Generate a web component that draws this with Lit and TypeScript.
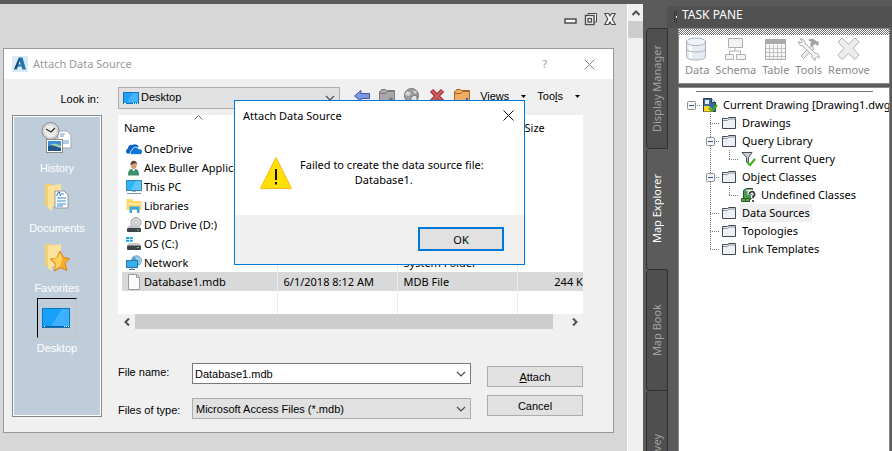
import { LitElement, html, css, svg, nothing } from "lit";
import { customElement, state } from "lit/decorators.js";
import { classMap } from "lit/directives/class-map.js";

const icon = (w: number, h: number, body: unknown) =>
  html`<svg width=${w} height=${h} viewBox="0 0 ${w} ${h}" aria-hidden="true">${body}</svg>`;

const chevron = icon(10, 6, svg`<path d="M1 1l4 4 4-4" fill="none" stroke="#4a4a4a" stroke-width="1.2"/>`);
const caret = icon(5, 3, svg`<path d="M0 0h5L2.500 3z" fill="#000"/>`);

const smallIcons: Record<string, unknown> = {
  onedrive: svg`<path d="M1 12.500a3 3 0 0 1 1-5 3.500 3.500 0 0 1 4.500-3.500A4.500 4.500 0 0 1 13 6l-3 .5-3 1.500-2 2v2.500z" fill="#0a64c4"/><path d="M5.500 13.500a2.500 2.500 0 0 1 .5-4.500A3.600 3.600 0 0 1 12.700 8 2.800 2.800 0 0 1 14.500 13.500z" fill="#0d74d8" stroke="#fff" stroke-width=".7"/>`,
  user: svg`<path d="M2 15.500c0-4 1-6 3-6.500h5c2 .5 3 2.500 3 6.500z" fill="#3d8f6b"/><path d="M6 9l1.500 2.500L9.500 9z" fill="#fff"/><ellipse cx="7.700" cy="5" rx="3" ry="4" fill="#d8a07a"/><path d="M4.500 5c-.5-5 6.500-6 6.500-.5L9.500 3z" fill="#5a4336"/>`,
  pc: svg`<rect x="0.500" y="1.500" width="15" height="10" fill="#2fb4f5" stroke="#3a86b8"/><path d="M10 2L5 11h10V2z" fill="#5cc8fa"/><path d="M1 14.500h14" stroke="#7795a8"/><path d="M6 12h4v1H6z" fill="#9fb2bf"/>`,
  libraries: svg`<path d="M0.500 1h6l1 2h8v9h-15z" fill="#ffd76a"/><path d="M0.500 5h15v2h-15z" fill="#ffe59a"/><path d="M3.500 15V8.500h10V15h-2.500v-3.500H6V15z" fill="#35a7e0"/>`,
  dvd: svg`<circle cx="10" cy="5.500" r="5" fill="#d6d8da" stroke="#8d9194" stroke-width=".8"/><circle cx="10" cy="5.500" r="1.600" fill="#fff" stroke="#999" stroke-width=".6"/><path d="M3 8.500h9l3 3H1z" fill="#c2c5c8"/><rect x="1" y="11" width="14" height="4" rx="1" fill="#3e4347"/><rect x="11" y="12.500" width="2" height="1" fill="#4be04b"/>`,
  disk: svg`<path d="M0 1h3v2H0zM3.700 1h3v2h-3zM0 3.700h3v2H0zM3.700 3.700h3v2h-3z" fill="#12a4ec"/><path d="M3 7h10l2 3H1z" fill="#c9ccce"/><rect x="1" y="9.500" width="14" height="4.500" rx="1" fill="#3e4347"/><rect x="11" y="11" width="2" height="1" fill="#4be04b"/>`,
  network: svg`<circle cx="10.500" cy="5.500" r="5.300" fill="#5b9cc8"/><path d="M7 1.500c3 1 4 3 2 5l5 3c2-3 2-6 0-8z" fill="#98c9e4"/><rect x="0.500" y="5.500" width="11" height="7" fill="#34b0f0" stroke="#2d74a8"/><path d="M3 14.500h6M6 12.500v2" stroke="#4e86ab"/>`,
  file: svg`<path d="M2.500.5h8l3 3v12h-11z" fill="#fbfbfb" stroke="#9a9a9a"/><path d="M10.500.5v3h3" fill="none" stroke="#9a9a9a"/>`,
};

const screen = svg`<rect x="0.500" y="0.500" width="15" height="11" fill="#1ea2fb" stroke="#1273b8"/><path d="M10 1L4 10h11V1z" fill="#44b3ff"/><path d="M1 11.500h2m7 0h1m1 0h1m1 0h1" stroke="#fff"/>`;

const placeFolder = svg`<path d="M4 2h7v25l-7-4z" fill="#f3cf74"/><path d="M7 4l13-2v21l-9 1v5l-4-3z" fill="#fbe29a"/>`;

const placeIcons: Record<string, unknown> = {
  History: svg`<path d="M17 9h9l4 4v13H17z" fill="#fff" stroke="#a9adb1"/><path d="M19 12h5m-5 2h4m-4 5h9m-9 2h9" stroke="#6b9ccb"/><circle cx="9.500" cy="9" r="8.500" fill="#d9d9d9" stroke="#8a8a8a"/><circle cx="9.500" cy="9" r="6.500" fill="#ececec" stroke="#b5b5b5" stroke-dasharray="1 2.400"/><path d="M5 7l5 3 4-4" fill="none" stroke="#333" stroke-width="1.300"/><rect x="5.500" y="17.500" width="16" height="13" fill="#fff" stroke="#8c8c8c"/><path d="M7 19h13v5H7z" fill="#3c8fd6"/><path d="M7 25c4-5 9-3 13-1v5H7z" fill="#a9cfb0"/><path d="M7 24c4-2 8 1 13 2v3H7z" fill="#25578a"/>`,
  Documents: svg`${placeFolder}<path d="M14 9h9l4 4v13H14z" fill="#fff" stroke="#96999c"/><path d="M20 12h3M16 16h9m-9 3h9m-9 3h9m-9 2h6" stroke="#2e8bd0"/><path d="M15.500 14l2-4h1l1 4" fill="none" stroke="#2e6fb0"/>`,
  Favorites: svg`${placeFolder}<path d="M19 9l3.500 6.500 6 1-4.500 5 2 7-6.500-3-6 3.500 1-7-5-5 6.500-1z" fill="#f9ab2c" stroke="#dd7e17"/><path d="M19 11l2.500 5.500-2.500 8-5 2.500 1-6-4-4 5-1z" fill="#fdd05a"/>`,
  Desktop: svg`<rect x="1.500" y="6.500" width="27" height="19" fill="#16a0fa" stroke="#1273b8"/><path d="M21 7L10 24h18V7z" fill="#3db0ff"/><path d="M2 24.500h26" stroke="#0d5f9c"/><path d="M3 24.500h1m19 0h1m1 0h1m1 0h1" stroke="#fff"/>`,
};

const navFolder = (fill: string, edge: string) =>
  svg`<path d="M0.500 14V3.500h1l1-2h4l1 1h8V14z" fill=${fill} stroke=${edge}/><path d="M1 5.500h6l1.500-2h7" fill="none" stroke=${edge}/>`;

const navTools = [
  { label: "Back", body: svg`<path d="M0.500 8L7 2.500V5.500h8.500v5H7v3z" fill="#7d96e0" stroke="#3f57ad"/>` },
  { label: "Up one level", body: svg`${navFolder("#a8a8a8", "#7b7b7b")}<path d="M12 9l3.500 4h-7z" fill="#777"/>` },
  { label: "Search the web", body: svg`<circle cx="7.500" cy="7.500" r="7" fill="#9c9c9c" stroke="#757575"/><path d="M3 3l4 2-2 3-4-1zM9 2l4 2-2 2z" fill="#d8d8d8"/><path d="M8 8.500a3 2.500 0 0 1 5 0V15H7V8.500z" fill="#e1e1e1" stroke="#777"/>` },
  { label: "Delete", body: svg`<path d="M2.500 2.500l11 11m0-11l-11 11" stroke="#8e2226" stroke-width="4.500"/><path d="M2.500 2.500l11 11m0-11l-11 11" stroke="#cf5b5e" stroke-width="2.500"/>` },
  { label: "Create new folder", body: svg`${navFolder("#efae66", "#a8641e")}<path d="M12 10h2v4h-2z" fill="#2f5fd8"/>` },
];

const paneTools = [
  { label: "Data", body: svg`<path d="M1.500 5v15c0 4 19 4 19 0V5z" fill="#e6ebf3" stroke="#a9b4c3"/><path d="M4 8v13l3 1V9z" fill="#fff"/><path d="M1.500 12c0 4 19 4 19 0" fill="none" stroke="#a9b4c3"/><ellipse cx="11" cy="4.800" rx="9.500" ry="3.800" fill="#f0f4f9" stroke="#a9b4c3"/>` },
  { label: "Schema", body: svg`<path d="M11 10v4M5.500 17v-3h11v3" fill="none" stroke="#b0b0b0"/><path d="M4.500 1.500h14v9h-14zM1.500 17.500h8v5h-8zM12.500 17.500h9v5h-9z" fill="#f3f3f3" stroke="#b0b0b0"/>` },
  { label: "Table", body: svg`<path d="M1.500 2.500h20v20h-20z" fill="#f6f6f6" stroke="#aaa"/><path d="M1 2h21v5H1z" fill="#a9a9a9"/><path d="M2 11.500h19m-19 4h19m-19 4h19M5.500 8v14m4-14v14m4-14v14m4-14v14" stroke="#c2c2c2"/>` },
  { label: "Tools", body: svg`<path d="M14 9l-10 10 2.500 2.500L17 11.500z" fill="#efefef" stroke="#a9a9a9"/><path d="M3 2a4 4 0 0 1 5 4.500l10 9.500a4 4 0 0 1 4 5l-2.500-1.500-2 2 1.500 1.500a4 4 0 0 1-4-5L5.500 9a4 4 0 0 1-4-4.500l2.500 1.500 1.500-1.500z" fill="#f6f6f6" stroke="#a9a9a9"/><path d="M11 3c3-2 6-1.500 8 1l3 1-1 4-3-2-3 3-2-2 1-3z" fill="#a4a4a4"/>` },
  { label: "Remove", body: svg`<path d="M1 5l4-4 6.500 6L18 1l4 4-6 6.500 6 6.500-4 4.500-6.500-6-6.500 6L1 18l6-6.500z" fill="#ededed" stroke="#b3b3b3" stroke-linejoin="round"/>` },
];

const treeFolder = svg`<path d="M0.500 13.500v-10h5l1.500-1h6.500v11z" fill="#eef0f3" stroke="#3f4753"/><path d="M1 5.500h4.500l1.500-1.500h6.500" fill="none" stroke="#8b929c"/>`;
const tick = (x: number, y: number) =>
  svg`<path d="M${x} ${y}l3 3 5-6" fill="none" stroke="#3fae1c" stroke-width="2"/>`;

const treeIcons: Record<string, unknown> = {
  folder: treeFolder,
  drawing: svg`<path d="M.5 1.500h8l4 4v9H.5z" fill="#3b6a9e" stroke="#2f3c4c"/><path d="M1 9h5l3 3v2.500H1z" fill="#ffd42a"/><path d="M8.500 1.500v4h4" fill="#dce8f4" stroke="#2f3c4c"/><path d="M2 3h4v4H2z" fill="#e8eef5"/>${tick(6, 11)}`,
  query: svg`<path d="M1 1.500h10L7.500 6.500V11H5.500V6.500z" fill="#c9ced4" stroke="#4a4f57"/>${tick(6, 11)}`,
  classes: svg`<path d="M2.500 3.500l3-2h6v9l-2 2h-7z" fill="#4c9a58" stroke="#2c4b32"/><path d="M5 3.500h6" stroke="#d6ecd9" stroke-width="1.500"/><path d="M.5 11.500h4v3h-4zm4 0h4v3h-4z" fill="#5cab4a" stroke="#2c5a20"/><path d="M8.500 7.500a2.500 2.500 0 1 1 3.500 2v1.800" fill="none" stroke="#fff" stroke-width="4"/><path d="M8.500 7.500a2.500 2.500 0 1 1 3.500 2v1.800M12 13v2" fill="none" stroke="#333" stroke-width="1.700"/>`,
};

type Cell = "blank" | "root" | "tee" | "elbow" | "line" | "open";
const treeRows: { text: string; icon: string; cells: Cell[]; selected?: boolean }[] = [
  { text: "Current Drawing [Drawing1.dwg]", icon: "drawing", cells: ["root"] },
  { text: "Drawings", icon: "folder", cells: ["blank", "tee"] },
  { text: "Query Library", icon: "folder", cells: ["blank", "open"] },
  { text: "Current Query", icon: "query", cells: ["blank", "line", "elbow"] },
  { text: "Object Classes", icon: "folder", cells: ["blank", "open"] },
  { text: "Undefined Classes", icon: "classes", cells: ["blank", "line", "elbow"] },
  { text: "Data Sources", icon: "folder", cells: ["blank", "tee"], selected: true },
  { text: "Topologies", icon: "folder", cells: ["blank", "tee"] },
  { text: "Link Templates", icon: "folder", cells: ["blank", "elbow"] },
];

const guide = (cell: Cell) => {
  const down = cell === "elbow" ? 9 : 18;
  const vertical = cell === "tee" || cell === "elbow" || cell === "line" || cell === "open";
  const across = cell !== "blank" && cell !== "line";
  const box = cell === "root" || cell === "open";
  return icon(19, 18, svg`
    ${vertical ? svg`<path d="M9.500 0V${down}" stroke="#7c7c7c" stroke-dasharray="1 1"/>` : nothing}
    ${across ? svg`<path d="M9 9.500h10" stroke="#7c7c7c" stroke-dasharray="1 1"/>` : nothing}
    ${box ? svg`<rect x="5.500" y="5.500" width="8" height="8" rx="1" fill="#f6f6f6" stroke="#8f8f8f"/><path d="M7 9.500h5" stroke="#2c4f9e"/>` : nothing}`);
};

@customElement("task-pane")
class TaskPane extends LitElement {
  static styles = css`
    :host { display: flex; flex-direction: column; min-width: 0; font: 11px/18px "Noto Sans", "Open Sans", sans-serif; }
    svg { display: block; flex: none; }
    .heading { display: flex; align-items: center; gap: 5px; height: 22px; margin: 6px 0 0 21px; padding-left: 7px; background: #515151; color: #fff; border-radius: 4px 0 0 0; }
    h2 { margin: 0 0 4px; font-size: 12px; font-weight: 400; line-height: 18px; }
    .columns { flex: 1; display: flex; min-height: 0; }
    .tabs { display: flex; flex-direction: column; width: 22px; flex: none; overflow: hidden; }
    .tab { flex: none; height: 121px; padding: 0; border: 1px solid #303030; border-top-width: 0; border-radius: 4px 0 0 4px; background: #4f4f4f; color: #a3a3a3; font: inherit; line-height: 16px; }
    .tab:first-child { border-top-width: 1px; }
    .tab.active { background: #5b5b5b; color: #fff; border-right-color: #5b5b5b; }
    .tab span { display: block; writing-mode: vertical-rl; transform: rotate(180deg); margin: 0 auto; }
    .panes { flex: 1; min-width: 0; display: flex; flex-direction: column; gap: 3px; padding: 0 2px 0 10px; }
    .toolbar { height: 54px; border: 1px solid #8a8a8a; background: #fff; overflow: hidden; }
    .grip { height: 6px; background: repeating-conic-gradient(#777 0 25%, #fff 0 50%) 0 0 / 2px 2px; }
    .tools { display: flex; gap: 6px; padding: 2px 6px; }
    .tool { display: flex; flex-direction: column; align-items: center; padding: 0; border: 0; background: none; font: inherit; color: #8a8a8a; }
    .tree { flex: 1; border: 1px solid #8a8a8a; border-bottom: 0; background: #fff; overflow: hidden; }
    .rule { border: 0; border-top: 1px solid #777; margin: 3px 16px 4px 17px; }
    ul { list-style: none; margin: 0; padding: 0 0 0 3px; }
    li { display: flex; align-items: center; height: 18px; white-space: nowrap; }
    .label { padding: 0 2px; }
    .mark { margin: 0 2px; }
    .selected { background: #f0f0f0; }
  `;

  @state() private active = "Map Explorer";

  render() {
    return html`
      <header class="heading">
        ${icon(3, 12, svg`<path d="M.5 0v12M2.500 1v12" stroke="#222" stroke-dasharray="1 1"/><path d="M2 5h1v2H2z" fill="#fff"/>`)}
        <h2>TASK PANE</h2>
      </header>
      <div class="columns">
        <nav class="tabs" aria-label="Panels">
          ${["Display Manager", "Map Explorer", "Map Book", "Survey"].map(
            (name) => html`<button class=${classMap({ tab: true, active: name === this.active })} @click=${() => (this.active = name)}><span>${name}</span></button>`
          )}
        </nav>
        <div class="panes">
          <div class="toolbar">
            <div class="grip"></div>
            <div class="tools">
              ${paneTools.map((t) => html`<button class="tool">${icon(24, 24, t.body)}${t.label}</button>`)}
            </div>
          </div>
          <div class="tree">
            <hr class="rule" />
            <ul>
              ${treeRows.map(
                (r) => html`<li>
                  ${r.cells.map(guide)}<span class="mark">${icon(16, 16, treeIcons[r.icon])}</span>
                  <span class=${classMap({ label: true, selected: !!r.selected })}>${r.text}</span>
                </li>`
              )}
            </ul>
          </div>
        </div>
      </div>
    `;
  }
}

@customElement("message-box")
class MessageBox extends LitElement {
  static styles = css`
    :host { display: block; box-sizing: border-box; border: 1px solid #0078d7; background: #fff; color: #000; font: 11px/15px "Noto Sans", "Open Sans", sans-serif; }
    svg { display: block; flex: none; }
    header { display: flex; align-items: center; justify-content: space-between; height: 28px; padding: 0 10px 0 8px; }
    h2 { margin: 0; font-size: 11px; font-weight: 400; }
    .close { padding: 0; border: 0; background: none; }
    .content { display: flex; gap: 8px; height: 86px; box-sizing: border-box; padding: 28px 25px 0 25px; }
    p { margin: 0; text-align: center; white-space: nowrap; }
    .name { display: block; padding-right: 16px; }
    footer { display: flex; justify-content: flex-end; height: 49px; box-sizing: border-box; padding: 12px 20px; background: #f0f0f0; }
    .ok { width: 86px; height: 24px; padding: 0; border: 2px solid #0078d7; background: #e1e1e1; font: inherit; }
  `;

  render() {
    return html`
      <header>
        <h2>Attach Data Source</h2>
        <button class="close" aria-label="Close">${icon(11, 11, svg`<path d="M.5.5l10 10m0-10l-10 10" stroke="#111"/>`)}</button>
      </header>
      <div class="content">
        ${icon(32, 32, svg`<path d="M16 .5L31.500 31.500H.5z" fill="#ffe000" stroke="#fdb913" stroke-linejoin="round"/><path d="M15 12h2v11H15zM15 25h2v2.500H15z" fill="#111"/>`)}
        <p>Failed to create the data source file:<span class="name">Database1.</span></p>
      </div>
      <footer><button class="ok">OK</button></footer>
    `;
  }
}

const files = [
  { name: "OneDrive", icon: "onedrive", date: "", type: "System Folder", size: "" },
  { name: "Alex Buller Application", icon: "user", date: "", type: "System Folder", size: "" },
  { name: "This PC", icon: "pc", date: "", type: "System Folder", size: "" },
  { name: "Libraries", icon: "libraries", date: "", type: "System Folder", size: "" },
  { name: "DVD Drive (D:)", icon: "dvd", date: "", type: "System Folder", size: "" },
  { name: "OS (C:)", icon: "disk", date: "", type: "System Folder", size: "" },
  { name: "Network", icon: "network", date: "", type: "System Folder", size: "" },
  { name: "Database1.mdb", icon: "file", date: "6/1/2018 8:12 AM", type: "MDB File", size: "244 KB" },
];

@customElement("file-dialog")
class FileDialog extends LitElement {
  static styles = css`
    :host { display: block; position: relative; border: 1px solid #999; background: #f0f0f0; color: #000; font: 11px/14px "Liberation Sans", Arial, sans-serif; }
    svg { display: block; flex: none; }
    button { font: inherit; color: inherit; padding: 0; }
    .title { display: flex; align-items: center; height: 30px; padding: 0 18px 0 8px; background: #fff; color: #999; font: 11px/16px "Noto Sans", "Open Sans", sans-serif; }
    h1 { flex: 1; margin: 0 0 0 5px; font-size: 11px; font-weight: 400; }
    .flat { display: flex; align-items: center; gap: 12px; border: 0; background: none; }
    .title .flat + .flat { margin-left: 37px; }
    .body { display: grid; grid-template-columns: 90px minmax(0, 1fr); column-gap: 16px; row-gap: 6px; padding: 8px 30px 13px 8px; }
    .look { padding: 5px 3px 0 0; text-align: right; }
    .bar { display: flex; align-items: center; height: 22px; }
    .combo { position: relative; display: flex; flex: 1; min-width: 0; }
    .combo > svg { position: absolute; right: 5px; top: 8px; pointer-events: none; }
    .combo > .lead { position: absolute; left: 5px; top: 5px; right: auto; pointer-events: none; }
    select, input { appearance: none; flex: 1; min-width: 0; box-sizing: border-box; height: 21px; margin: 0; padding: 0 16px 0 3px; border: 1px solid #adadad; border-radius: 0; background: #e1e1e1; color: #000; font: inherit; outline: none; }
    input { background: #fff; border-color: #7a7a7a; padding-left: 2px; }
    .bar select { height: 22px; padding: 0 16px 2px 22px; }
    .nav { display: flex; align-items: center; gap: 9px; margin: 0 10px 0 14px; padding-bottom: 4px; }
    .menus { display: flex; gap: 11px; padding: 0 3px 4px 0; }
    .places { margin-bottom: 2px; border: 1px solid #838790; outline: 1px solid #fff; outline-offset: -2px; background: #bfcddb; padding: 2px 1px; display: flex; flex-direction: column; align-items: center; }
    .place { display: flex; flex-direction: column; align-items: center; height: 60px; border: 0; background: none; color: #fff; line-height: 20px; white-space: nowrap; }
    .frame { box-sizing: border-box; width: 40px; height: 40px; padding: 3px; border: 1px solid transparent; }
    .place.current .frame { border-color: #000 #c3c3c3 #c3c3c3 #000; }
    .main { display: flex; flex-direction: column; min-width: 0; }
    .list { height: 199px; background: #fff; overflow: hidden; font: 11px/15px "Noto Sans", "Open Sans", sans-serif; }
    table { border-collapse: collapse; table-layout: fixed; width: 100%; }
    .wide { width: 159px; }
    .mid { width: 120px; }
    th { height: 24px; padding: 5px 7px 0; box-sizing: border-box; font-weight: 400; text-align: left; vertical-align: top; }
    th:first-child { padding: 0 6px; }
    td { height: 19px; padding: 0 6px; white-space: nowrap; overflow: hidden; }
    td + td, th + th { border-left: 1px solid #e2edf8; }
    .rest td { height: 23px; }
    .entry { display: flex; align-items: center; gap: 2px; height: 19px; margin: 0 -6px 0 -2px; padding-left: 4px; }
    .size { text-align: right; padding: 0; }
    .size span { display: block; margin-right: -7px; }
    .head { display: flex; flex-direction: column; }
    .head svg { margin: 0 auto 0 70px; }
    .picked td { background: linear-gradient(#d9d9d9, #d9d9d9); }
    .picked td:first-child { background-position: 4px 0; background-repeat: no-repeat; }
    .scroll { display: flex; align-items: center; height: 15px; margin-bottom: 34px; }
    .track { flex: 1; align-self: stretch; padding-right: 13px; }
    .thumb { height: 100%; background: #cdcdcd; }
    .end { display: flex; align-items: center; justify-content: center; width: 17px; height: 15px; border: 0; background: none; }
    .form { display: grid; grid-template-columns: 58px minmax(0, 1fr) 96px; gap: 8px 16px; align-items: start; }
    .fields { display: flex; flex-direction: column; gap: 14px; }
    .captions { display: flex; flex-direction: column; gap: 24px; padding-top: 2px; white-space: nowrap; }
    .actions { display: flex; flex-direction: column; gap: 8px; padding-top: 3px; }
    .push { height: 21px; border: 1px solid #adadad; background: #e1e1e1; }
    message-box { position: absolute; left: 230px; top: 51px; width: 291px; }
  `;

  @state() private place = "Desktop";

  render() {
    return html`
      <header class="title">
        ${icon(16, 16, svg`<path d="M0 0h16v16H0z" fill="#d9e9f5"/><path d="M2 13.500L7 1.500h3.500L14 13.500h-3.500l-1-3H6l-1.200 3z" fill="#1f77ad"/><path d="M7.500 5L6.500 8.500h2.300z" fill="#d9e9f5"/><path d="M2 13.500L7 1.500 8 3 5 12z" fill="#14507c"/>`)}
        <h1>Attach Data Source</h1>
        <button class="flat" aria-label="Help">?</button>
        <button class="flat" aria-label="Close">${icon(11, 11, svg`<path d="M.5.5l10 10m0-10l-10 10" stroke="#888"/>`)}</button>
      </header>
      <div class="body">
        <label class="look" for="folder">Look in:</label>
        <div class="bar">
          <div class="combo">
            <select id="folder"><option>Desktop</option></select>
            ${chevron}
            <svg class="lead" width="16" height="12" viewBox="0 0 16 12" aria-hidden="true">${screen}</svg>
          </div>
          <div class="nav">
            ${navTools.map((t) => html`<button class="flat" aria-label=${t.label}>${icon(16, 16, t.body)}</button>`)}
          </div>
          <div class="menus">
            <button class="flat">Views ${caret}</button>
            <button class="flat"><span>Too<u>l</u>s</span> ${caret}</button>
          </div>
        </div>
        <nav class="places" aria-label="Places">
          ${Object.keys(placeIcons).map(
            (p) => html`<button class=${classMap({ place: true, current: p === this.place })} @click=${() => (this.place = p)}>
              <span class="frame">${icon(32, 32, placeIcons[p])}</span>${p}
            </button>`
          )}
        </nav>
        <div class="main">
          <div class="list">
            <table>
              <colgroup><col class="wide" /><col class="mid" /><col class="mid" /><col /></colgroup>
              <thead>
                <tr>
                  <th scope="col"><div class="head">${icon(9, 5, svg`<path d="M.5 4.500l4-4 4 4" fill="none" stroke="#666"/>`)}Name</div></th>
                  <th scope="col">Date modified</th><th scope="col">Item type</th><th scope="col">Size</th>
                </tr>
              </thead>
              <tbody>
                ${files.map(
                  (f) => html`<tr class=${classMap({ picked: !!f.size })}>
                    <td><div class="entry">${icon(16, 16, smallIcons[f.icon])}${f.name}</div></td>
                    <td>${f.date}</td><td>${f.type}</td><td class="size"><span>${f.size}</span></td>
                  </tr>`
                )}
                <tr class="rest"><td></td><td></td><td></td><td></td></tr>
              </tbody>
            </table>
          </div>
          <div class="scroll">
            <button class="end" aria-label="Scroll left">${icon(6, 8, svg`<path d="M5 0.500L1.500 4 5 7.500" fill="none" stroke="#505050" stroke-width="2"/>`)}</button>
            <div class="track"><div class="thumb"></div></div>
            <button class="end" aria-label="Scroll right">${icon(6, 8, svg`<path d="M1 .5L4.500 4 1 7.500" fill="none" stroke="#505050" stroke-width="2"/>`)}</button>
          </div>
          <div class="form">
            <div class="captions"><label for="name">File name:</label><label for="kind">Files of type:</label></div>
            <div class="fields">
              <div class="combo"><input id="name" value="Database1.mdb" />${chevron}</div>
              <div class="combo"><select id="kind"><option>Microsoft Access Files (*.mdb)</option></select>${chevron}</div>
            </div>
            <div class="actions">
              <button class="push"><u>A</u>ttach</button>
              <button class="push">Cancel</button>
            </div>
          </div>
        </div>
      </div>
      <message-box></message-box>
    `;
  }
}

@customElement("app-root")
class AppRoot extends LitElement {
  static styles = css`
    :host { display: grid; grid-template-columns: minmax(0, 1fr) 246px; column-gap: 3px; height: 100vh; overflow: hidden; background: #5b5b5b; }
    svg { display: block; }
    .drawing { display: flex; min-width: 0; margin-top: 4px; background: #d7d7d7; overflow: hidden; }
    .canvas { flex: 1; min-width: 0; padding: 8px 13px 0 3px; }
    .window { display: flex; justify-content: flex-end; gap: 6px; height: 36px; margin-right: -2px; }
    .window button, .up { padding: 0; border: 0; background: none; height: 14px; }
    .vertical { flex: none; width: 15px; border-left: 1px solid #fff; background: #f0f0f0; }
    .up { display: flex; align-items: center; justify-content: center; width: 100%; height: 17px; }
    .grab { height: 17px; background: #cdcdcd; }
    task-pane { min-width: 0; min-height: 0; }
  `;

  render() {
    return html`
      <main class="drawing">
        <div class="canvas">
          <div class="window">
            <button aria-label="Minimize">${icon(14, 14, svg`<rect x="1" y="7" width="11" height="4" fill="#fff" stroke="#4c4c4c" stroke-width="1.500"/>`)}</button>
            <button aria-label="Restore">${icon(14, 14, svg`<path d="M4 4V1.500h8.500V10H10" fill="#f4f4f4" stroke="#4c4c4c"/><rect x="1.500" y="3.500" width="8.500" height="9" fill="#fff" stroke="#4c4c4c" stroke-width="1.400"/><rect x="4" y="6.500" width="3.500" height="3.500" fill="#fff" stroke="#4c4c4c" stroke-width="1.400"/>`)}</button>
            <button aria-label="Close">${icon(12, 14, svg`<path d="M.8 1.500h3.700L6 4l1.500-2.500h3.700L8.200 7l3 5.500H7.500L6 10l-1.500 2.500H.8L3.800 7z" fill="#fff" stroke="#4c4c4c" stroke-width="1.200"/>`)}</button>
          </div>
          <file-dialog></file-dialog>
        </div>
        <div class="vertical">
          <button class="up" aria-label="Scroll up">${icon(8, 6, svg`<path d="M.5 5L4 1.500 7.500 5" fill="none" stroke="#505050" stroke-width="2"/>`)}</button>
          <div class="grab"></div>
        </div>
      </main>
      <task-pane></task-pane>
    `;
  }
}
